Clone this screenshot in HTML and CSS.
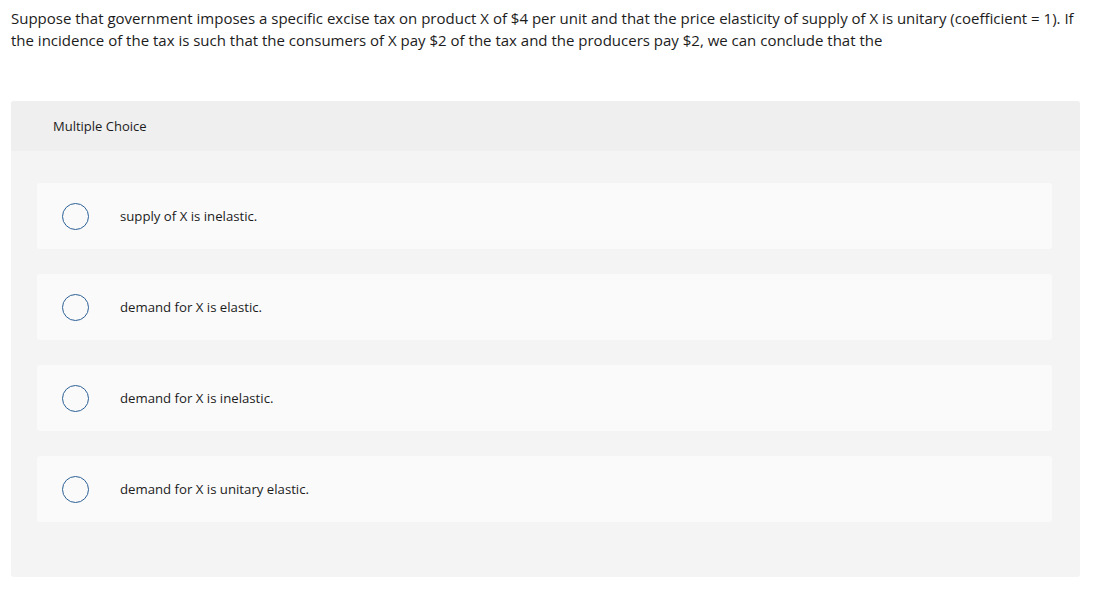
FILE: index.html
```html
<!DOCTYPE html>
<html>
<head>
<meta charset="utf-8">
<link rel="stylesheet" href="styles.css">
</head>
<body>
<div class="page">
  <p class="question">Suppose that government imposes a specific excise tax on product X of $4 per unit and that the price elasticity of supply of X is unitary (coefficient = 1). If the incidence of the tax is such that the consumers of X pay $2 of the tax and the producers pay $2, we can conclude that the</p>
  <div class="mc">
    <div class="mc-header">Multiple Choice</div>
    <div class="mc-body">
      <div class="option"><span class="radio"></span><span class="label">supply of X is inelastic.</span></div>
      <div class="option"><span class="radio"></span><span class="label">demand for X is elastic.</span></div>
      <div class="option"><span class="radio"></span><span class="label">demand for X is inelastic.</span></div>
      <div class="option"><span class="radio"></span><span class="label">demand for X is unitary elastic.</span></div>
    </div>
  </div>
</div>
</body>
</html>
```
FILE: styles.css
```css
html, body {
  margin: 0;
  padding: 0;
  background: #ffffff;
}
body {
  font-family: "Open Sans", "Liberation Sans", sans-serif;
  color: #1c1c1c;
}
.page {
  padding: 7px 21px 0 11px;
}
.question {
  margin: 0;
  font-size: 15px;
  line-height: 22px;
}
.mc {
  margin-top: 50px;
  background: #f4f4f4;
  border-radius: 3px;
  overflow: hidden;
}
.mc-header {
  height: 50px;
  background: #efefef;
  display: flex;
  align-items: center;
  padding-left: 42px;
  font-size: 13px;
}
.mc-body {
  padding: 32px 28px 55px 26px;
  display: flex;
  flex-direction: column;
  gap: 25px;
}
.option {
  height: 66px;
  background: #fafafa;
  border-radius: 3px;
  display: flex;
  align-items: center;
  padding-left: 25px;
}
.radio {
  width: 25px;
  height: 25px;
  border: 1.5px solid #2c6096;
  border-radius: 50%;
  flex: none;
}
.label {
  margin-left: 31px;
  font-size: 13.2px;
}
```
